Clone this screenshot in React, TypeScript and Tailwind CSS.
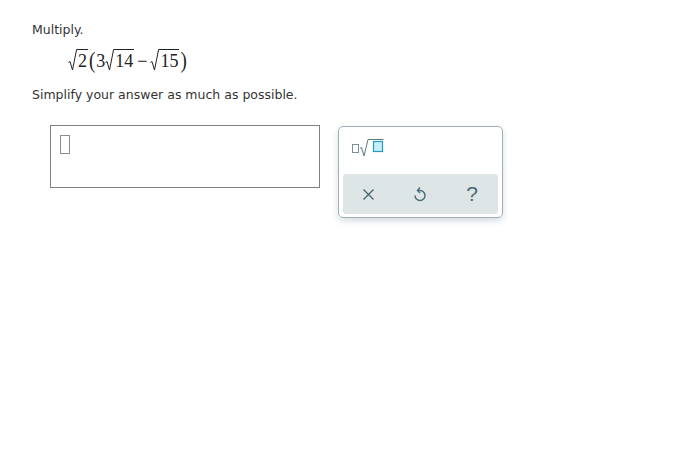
import React from 'react';

const Radical = ({ children }: { children: React.ReactNode }) => (
  <span className="inline-flex items-stretch">
    <svg width="9" height="22" viewBox="0 0 9 22" className="shrink-0">
      <path d="M0.5 13.5 L2 12.5 L4.5 21 L8.6 0.5 L9 0.5" fill="none" stroke="#222" strokeWidth="1" />
    </svg>
    <span className="border-t border-[#222] pt-[1px] leading-[20px] px-[1px]">{children}</span>
  </span>
);

const Paren = ({ children }: { children: React.ReactNode }) => (
  <span className="inline-block text-[19px] leading-[22px] scale-y-[1.25] px-[1px]">{children}</span>
);

const App = () => {
  return (
    <div className="w-[679px] h-[475px] bg-white font-['DejaVu_Sans',Verdana,sans-serif] text-[12.5px] text-[#333]">
      <div className="pl-[32px] pt-[21px]">
        <p className="leading-[18px]">Multiply.</p>

        <div className="pl-[36px] mt-[10px] h-[22px] font-['Liberation_Serif',serif] text-[18px] text-[#222] flex items-stretch">
          <Radical>2</Radical>
          <Paren>(</Paren>
          <span className="leading-[22px] pt-[1px]">3</span>
          <Radical>14</Radical>
          <span className="leading-[22px] pt-[1px] mx-[3px]">−</span>
          <Radical>15</Radical>
          <Paren>)</Paren>
        </div>

        <p className="leading-[18px] mt-[15px]">Simplify your answer as much as possible.</p>
      </div>

      <div className="flex items-start mt-[21px] pl-[50px]">
        <div className="w-[270px] h-[63px] border border-[#808080] pl-[9px] pt-[9px]">
          <div className="w-[10px] h-[19px] border border-[#8c8c8c]" />
        </div>

        <div className="ml-[18px] mt-[1px] w-[165px] h-[92px] rounded-[5px] border border-[#9fb0b6] shadow-[0_3px_6px_rgba(90,120,130,0.25)] flex flex-col px-[4px] pb-[3px]">
          <div className="h-[47px] pl-[7px] pt-[10px]">
            <svg width="34" height="20" viewBox="0 0 34 20" className="block">
              <rect x="2.5" y="7.5" width="6" height="8" fill="#fff" stroke="#7a8e95" strokeWidth="1" />
              <path d="M10 11.5 L11.5 10.5 L14 19 L18 2.5 L33.5 2.5" fill="none" stroke="#5f7880" strokeWidth="1" />
              <rect x="23.5" y="4.5" width="9" height="10" fill="#c8eef8" stroke="#1f9cc2" strokeWidth="1.2" />
            </svg>
          </div>
          <div className="flex-1 rounded-[3px] bg-[#dde5e7] flex items-center">
            <div className="w-1/3 flex justify-center">
              <svg width="11" height="11" viewBox="0 0 11 11">
                <path d="M0.5 0.5 L10.5 10.5 M10.5 0.5 L0.5 10.5" stroke="#4a6a73" strokeWidth="1.4" fill="none" />
              </svg>
            </div>
            <div className="w-1/3 flex justify-center">
              <svg width="14" height="16" viewBox="0 0 14 16">
                <path d="M2 9.5 A5 5 0 1 0 7 4.5 L5 4.5" stroke="#4a6a73" strokeWidth="1.4" fill="none" />
                <path d="M7 1.5 L4.5 4.5 L7 7" stroke="#4a6a73" strokeWidth="1.4" fill="none" />
              </svg>
            </div>
            <div className="w-1/3 flex justify-center">
              <span className="font-['Liberation_Sans',sans-serif] text-[21px] leading-[20px] text-[#4a6a73]">?</span>
            </div>
          </div>
        </div>
      </div>
    </div>
  );
};

export default App;
